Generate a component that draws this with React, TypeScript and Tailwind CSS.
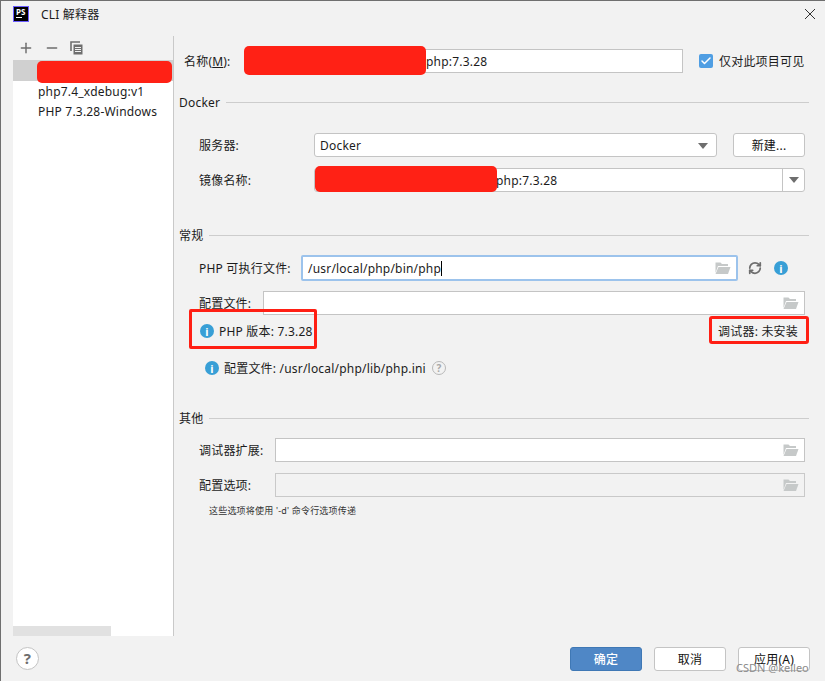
import type { ReactNode } from "react"
import { Check, Minus, Plus, RefreshCw } from "lucide-react"

const FONT = "font-['Noto_Sans','Noto_Sans_CJK_SC',sans-serif]"

function FolderIcon() {
  return (
    <svg width="16" height="14" viewBox="0 0 16 14" className="shrink-0">
      <path d="M0.5 1.5h5l1.5 1.5h6v2h-10l-2.5 7z" fill="#c6c9c9" />
      <path d="M3.5 6h12l-2.5 7h-12.5z" fill="#c6c9c9" />
    </svg>
  )
}

function CopyIcon() {
  return (
    <svg width="13" height="14" viewBox="0 0 13 14" className="shrink-0">
      <path d="M1 10V1h9" fill="none" stroke="#6e6e6e" strokeWidth="1.6" />
      <path d="M3.5 3.5h9v10h-9z" fill="#6e6e6e" />
      <path d="M5 6.5h6M5 8.5h6M5 10.5h6" stroke="#f2f2f2" strokeWidth="1" />
    </svg>
  )
}

function InfoIcon() {
  return (
    <span className="flex size-[14px] shrink-0 items-center justify-center rounded-full bg-[#389fd6] text-[11px] leading-none font-bold text-white">
      i
    </span>
  )
}

function SectionTitle({ children, className }: { children: ReactNode; className: string }) {
  return (
    <div className={`-ml-px flex h-[20px] items-center gap-[6px] ${className}`}>
      <span className="pt-[2px] text-[#1c1c1c]">{children}</span>
      <div className="h-px flex-1 bg-[#cdcdcd]" />
    </div>
  )
}

function Arrow() {
  return <div className="h-0 w-0 border-x-[5px] border-t-[6px] border-x-transparent border-t-[#6e6e6e]" />
}

function Button({ children, primary }: { children: ReactNode; primary?: boolean }) {
  return (
    <button
      type="button"
      className={
        primary
          ? "h-[24px] w-[72px] rounded-[3px] border border-[#3f78b5] bg-[#4f87c6] pt-[2px] font-medium text-white"
          : "h-[24px] w-[72px] rounded-[3px] border border-[#c4c4c4] bg-white pt-[2px] text-[#111]"
      }
    >
      {children}
    </button>
  )
}

function Scribble({ className }: { className: string }) {
  return <div className={`absolute rounded-[5px] bg-[#ff2115] ${className}`} />
}

export default function App() {
  return (
    <div className={`relative flex h-[681px] w-[825px] flex-col overflow-hidden border-t border-l border-[#6f6f6f] bg-[#f2f2f2] ${FONT} text-[12px] tracking-[0.2px] text-[#1c1c1c]`}>
      {/* title bar */}
      <div className="flex h-[35px] shrink-0 items-start pt-[5px] pl-[12px]">
        <div className="flex h-[16px] w-[16px] flex-col border border-[#6a5cff] bg-black px-[2px] text-[8px] leading-[9px] font-bold tracking-normal text-white">
          PS
          <div className="mt-[1px] h-px w-[6px] bg-white" />
        </div>
        <span className="ml-[12px] leading-[17px]">CLI 解释器</span>
        <svg width="12" height="12" viewBox="0 0 12 12" className="mt-[2px] mr-[9px] ml-auto">
          <path d="M1 1l10 10M11 1L1 11" stroke="#333" strokeWidth="1" />
        </svg>
      </div>

      <div className="flex min-h-0 flex-1">
        {/* interpreter list */}
        <div className="ml-[12px] flex w-[161px] shrink-0 flex-col border-r border-[#c9c9c9]">
          <div className="flex h-[24px] shrink-0 items-center gap-[10px] pl-[5px] text-[#6e6e6e]">
            <Plus size={16} strokeWidth={2.2} />
            <Minus size={16} strokeWidth={2.2} />
            <CopyIcon />
          </div>
          <div className="relative flex flex-1 flex-col bg-white">
            <div className="h-[21px] shrink-0 bg-[#d0d0d0]" />
            <Scribble className="top-px left-[24px] h-[22px] w-[135px]" />
            <div className="flex h-[20px] items-center pt-[2px] pl-[25px] leading-none">php7.4_xdebug:v1</div>
            <div className="flex h-[20px] items-center pt-[2px] pl-[25px] leading-none">PHP 7.3.28-Windows</div>
            <div className="mt-auto h-[10px] w-[98px] bg-[#e1e1e1]" />
          </div>
        </div>

        {/* form */}
        <div className="min-w-0 flex-1 pr-[16px] pl-[6px]">
          <div className="mt-[13px] flex h-[24px] items-center">
            <span className="w-[65px] pt-[2px] pl-[4px]">
              名称(<span className="underline">M</span>):
            </span>
            <div className="relative flex h-[24px] w-[438px] items-center border border-[#c4c4c4] bg-white pt-[2px] pl-[180px]">
              php:7.3.28
              <Scribble className="-top-[4px] -left-[2px] h-[29px] w-[182px]" />
            </div>
            <div className="ml-[16px] flex size-[14px] items-center justify-center rounded-[2px] bg-[#4f9ee3]">
              <Check size={12} strokeWidth={3} className="text-white" />
            </div>
            <span className="ml-[6px] pt-[2px]">仅对此项目可见</span>
          </div>

          <SectionTitle className="mt-[19px]">Docker</SectionTitle>

          <div className="mt-[21px] flex h-[24px] items-center">
            <span className="w-[134px] pt-[2px] pl-[19px]">服务器:</span>
            <div className="flex h-[24px] w-[403px] items-center justify-between rounded-[3px] border border-[#c4c4c4] bg-white pt-[2px] pr-[8px] pl-[5px]">
              Docker
              <Arrow />
            </div>
            <div className="ml-[16px]">
              <Button>新建...</Button>
            </div>
          </div>

          <div className="mt-[11px] flex h-[24px] items-center">
            <span className="w-[134px] pt-[2px] pl-[19px]">镜像名称:</span>
            <div className="relative flex h-[24px] w-[491px] items-center rounded-[3px] border border-[#c4c4c4] bg-white pl-[181px]">
              <span className="pt-[2px]">php:7.3.28</span>
              <Scribble className="-top-[3px] left-0 h-[26px] w-[182px]" />
              <div className="ml-auto flex h-full w-[22px] items-center justify-center border-l border-[#c4c4c4]">
                <Arrow />
              </div>
            </div>
          </div>

          <SectionTitle className="mt-[33px]">常规</SectionTitle>

          <div className="mt-[10px] flex h-[26px] items-center">
            <span className="w-[121px] pt-[2px] pl-[19px]">PHP 可执行文件:</span>
            <div className="flex h-[26px] w-[437px] items-center rounded-[2px] border-2 border-[#9cc3ec] bg-white px-[5px]">
              <span className="pt-[2px]">/usr/local/php/bin/php</span>
              <div className="h-[15px] w-px bg-black" />
              <div className="ml-auto">
                <FolderIcon />
              </div>
            </div>
            <RefreshCw size={14} strokeWidth={3} className="ml-[10px] text-[#6e6e6e]" />
            <div className="ml-[12px]">
              <InfoIcon />
            </div>
          </div>

          <div className="mt-[10px] flex h-[24px] items-center">
            <span className="w-[83px] pt-[2px] pl-[19px]">配置文件:</span>
            <div className="flex h-[24px] w-[542px] items-center justify-end border border-[#c4c4c4] bg-white pr-[5px]">
              <FolderIcon />
            </div>
          </div>

          <div className="mt-[4px] flex h-[24px] items-center justify-between pr-[11px] pl-[20px]">
            <div className="flex items-center gap-[5px]">
              <InfoIcon />
              <span className="pt-[2px]">PHP 版本: 7.3.28</span>
            </div>
            <span className="pt-[2px]">调试器: 未安装</span>
          </div>

          <div className="mt-[13px] flex h-[24px] items-center gap-[5px] pl-[25px]">
            <InfoIcon />
            <span className="pt-[2px]">配置文件: /usr/local/php/lib/php.ini</span>
            <span className="ml-[1px] flex size-[14px] items-center justify-center rounded-full border border-[#b8b8b8] text-[10px] font-bold text-[#a8a8a8]">
              ?
            </span>
          </div>

          <SectionTitle className="mt-[28px]">其他</SectionTitle>

          <div className="mt-[10px] flex h-[24px] items-center">
            <span className="w-[95px] pt-[2px] pl-[19px]">调试器扩展:</span>
            <div className="flex h-[24px] w-[530px] items-center justify-end border border-[#c4c4c4] bg-white pr-[5px]">
              <FolderIcon />
            </div>
          </div>

          <div className="mt-[11px] flex h-[24px] items-center">
            <span className="w-[95px] pt-[2px] pl-[19px]">配置选项:</span>
            <div className="flex h-[24px] w-[530px] items-center justify-end border border-[#c9c9c9] bg-[#f2f2f2] pr-[5px]">
              <FolderIcon />
            </div>
          </div>

          <div className="mt-[6px] pl-[29px] text-[9px] leading-[16px] text-[#333]">这些选项将使用 '-d' 命令行选项传递</div>
        </div>
      </div>

      {/* footer */}
      <div className="flex h-[45px] shrink-0 items-start pt-[11px] pr-[15px] pl-[15px]">
        <div className="flex size-[23px] items-center justify-center rounded-full border border-[#c4c4c4] bg-white text-[15px] font-bold text-[#6e6e6e]">
          ?
        </div>
        <div className="ml-auto flex gap-[12px]">
          <Button primary>确定</Button>
          <Button>取消</Button>
          <Button>应用(A)</Button>
        </div>
      </div>

      {/* overlays: annotation boxes and watermark */}
      <div className="absolute top-[308px] left-[188px] h-[40px] w-[128px] rounded-[2px] border-[3px] border-[#ff1f14]" />
      <div className="absolute top-[315px] left-[708px] h-[28px] w-[100px] rounded-[3px] border-[3px] border-[#ff1f14]" />
      <div className="absolute top-[659px] left-[735px] text-[11px] tracking-normal text-[#8c8c8c]">CSDN @kelleo</div>
    </div>
  )
}
